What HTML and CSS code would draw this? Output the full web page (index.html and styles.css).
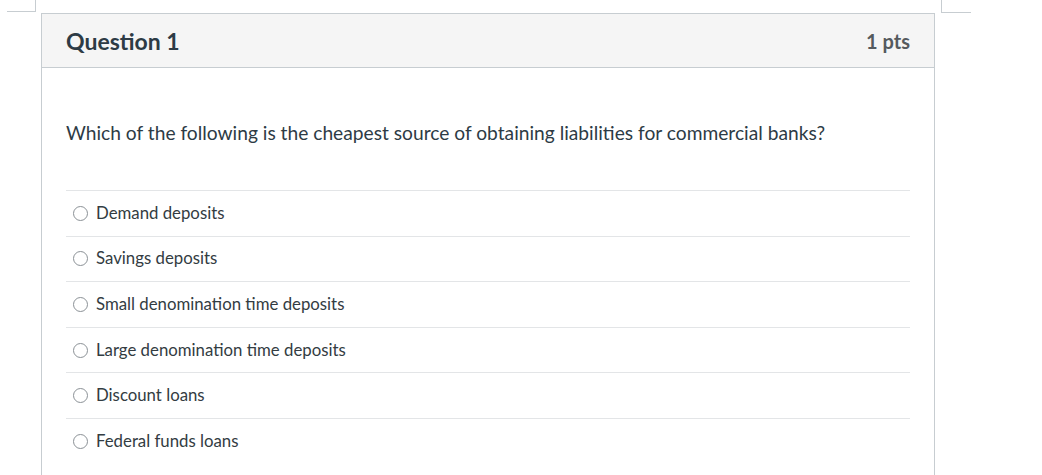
FILE: index.html
```html
<!DOCTYPE html>
<html>
<head>
<meta charset="utf-8">
<link rel="stylesheet" href="styles.css">
</head>
<body>
<div class="page">
  <div class="side-left"><div class="corner-left"></div></div>
  <div class="card">
    <div class="card-header">
      <span class="q-title">Question 1</span>
      <span class="q-pts">1 pts</span>
    </div>
    <div class="card-body">
      <p class="q-text">Which of the following is the cheapest source of obtaining liabilities for commercial banks?</p>
      <div class="answers">
        <label class="answer"><span class="radio"></span><span class="a-text">Demand deposits</span></label>
        <label class="answer"><span class="radio"></span><span class="a-text">Savings deposits</span></label>
        <label class="answer"><span class="radio"></span><span class="a-text">Small denomination time deposits</span></label>
        <label class="answer"><span class="radio"></span><span class="a-text">Large denomination time deposits</span></label>
        <label class="answer"><span class="radio"></span><span class="a-text">Discount loans</span></label>
        <label class="answer"><span class="radio"></span><span class="a-text">Federal funds loans</span></label>
      </div>
    </div>
  </div>
  <div class="side-right"><div class="corner-right"></div></div>
</div>
</body>
</html>
```

FILE: styles.css
```css
html, body {
  margin: 0;
  padding: 0;
  background: #ffffff;
  font-family: Lato, "Noto Sans", sans-serif;
  color: #2d3b45;
  overflow: hidden;
}
.page {
  display: grid;
  grid-template-columns: 41px 894px 1fr;
  align-items: start;
}
.corner-left {
  margin-left: 7px;
  width: 28px;
  height: 11px;
  border-right: 1px solid #c7cdd1;
  border-bottom: 1px solid #c7cdd1;
}
.corner-right {
  margin-left: 6px;
  width: 29px;
  height: 12px;
  border-left: 1px solid #c7cdd1;
  border-bottom: 1px solid #c7cdd1;
}
.card {
  margin-top: 13px;
  border: 1px solid #c7cdd1;
  border-bottom: none;
  height: 470px;
  box-sizing: border-box;
}
.card-header {
  display: flex;
  justify-content: space-between;
  align-items: center;
  height: 54px;
  padding: 0 24px;
  background: #f5f5f5;
  border-bottom: 1px solid #c7cdd1;
  box-sizing: border-box;
}
.q-title {
  font-size: 23px;
  font-weight: 700;
  color: #2d3b45;
}
.q-pts {
  font-size: 20px;
  font-weight: 700;
  color: #555a5e;
}
.card-body {
  padding: 53px 24px 0;
}
.q-text {
  margin: 0 0 45px;
  font-size: 19.2px;
  line-height: 24px;
}
.answers {
  display: flex;
  flex-direction: column;
}
.answer {
  display: flex;
  align-items: center;
  gap: 8px;
  height: 45.6px;
  box-sizing: border-box;
  border-top: 1px solid #e3e5e7;
  padding: 0 0 2px 7px;
  font-size: 16.8px;
  color: #333c42;
}
.radio {
  width: 15px;
  height: 15px;
  margin-top: 2px;
  border: 1px solid #8b9196;
  border-radius: 50%;
  box-sizing: border-box;
  flex: none;
}
```
